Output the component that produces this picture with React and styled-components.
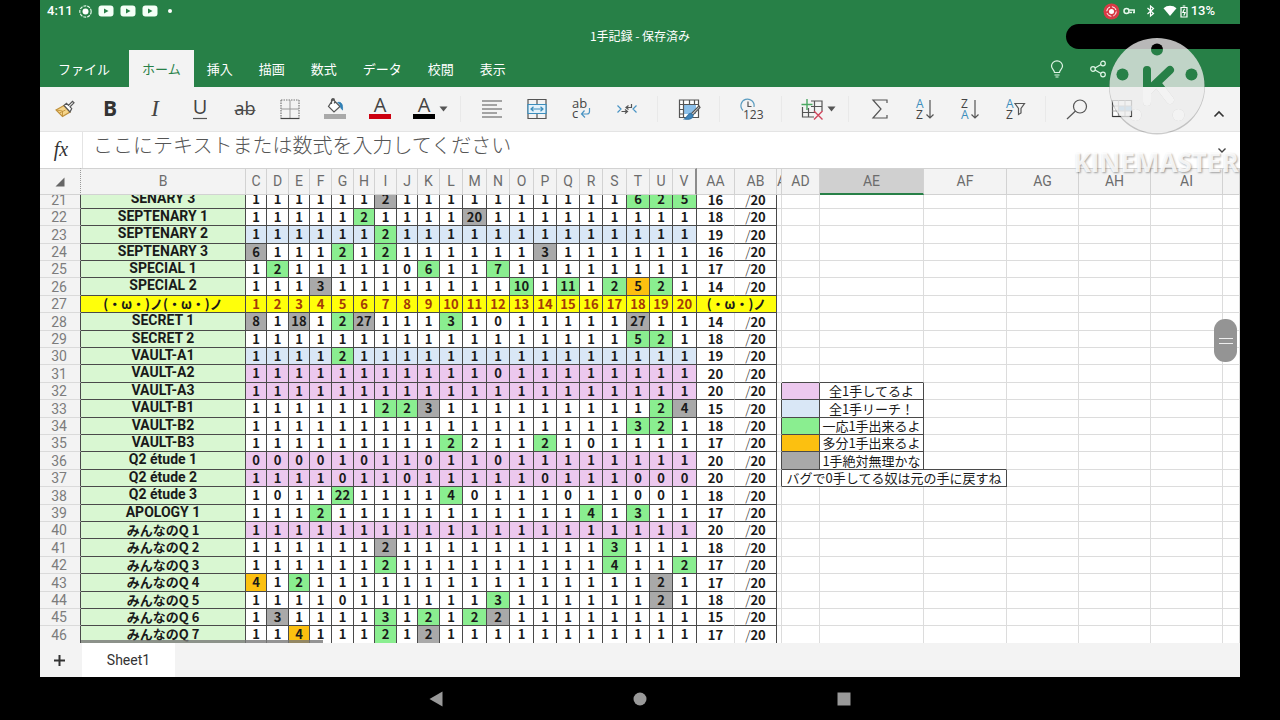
import styled, { createGlobalStyle, css } from 'styled-components';

const GlobalStyle = createGlobalStyle`
  * {
    box-sizing: border-box;
  }
  body {
    margin: 0;
    background: #000;
    font-family: 'Noto Sans CJK JP', 'Noto Sans', sans-serif;
  }
  button {
    border: 0;
    padding: 0;
    background: none;
    font-family: inherit;
    color: inherit;
    cursor: pointer;
  }
  svg {
    overflow: visible;
  }
`;

const COLORS = {
  g: '#8aee90',
  x: '#a9a9a9',
  o: '#fcc010',
  pink: '#ecc8ee',
  blue: '#d9e7f6',
  label: '#d9f7d2',
  yellow: '#ffff0a',
  line: '#4a4a4a',
  grid: '#dcdcdc',
};

const LATIN = "Roboto, 'Noto Sans CJK JP', sans-serif";

/* ---------- data ---------- */

const ROWS = [
  { no: 21, name: 'SENARY 3', v: '1 1 1 1 1 1 2x 1 1 1 1 1 1 1 1 1 1 6g 2g 5g', total: 16 },
  { no: 22, name: 'SEPTENARY 1', v: '1 1 1 1 1 2g 1 1 1 1 20x 1 1 1 1 1 1 1 1 1', total: 18 },
  { no: 23, name: 'SEPTENARY 2', v: '1 1 1 1 1 1 2g 1 1 1 1 1 1 1 1 1 1 1 1 1', total: 19, fill: 'blue' },
  { no: 24, name: 'SEPTENARY 3', v: '6x 1 1 1 2g 1 2g 1 1 1 1 1 1 3x 1 1 1 1 1 1', total: 16 },
  { no: 25, name: 'SPECIAL 1', v: '1 2g 1 1 1 1 1 0 6g 1 1 7g 1 1 1 1 1 1 1 1', total: 17 },
  { no: 26, name: 'SPECIAL 2', v: '1 1 1 3x 1 1 1 1 1 1 1 1 10g 1 11g 1 2g 5o 2g 1', total: 14 },
  { no: 27, name: '(・ω・)ノ(・ω・)ノ', v: '1 2 3 4 5 6 7 8 9 10 11 12 13 14 15 16 17 18 19 20', fill: 'yellow' },
  { no: 28, name: 'SECRET 1', v: '8x 1 18x 1 2g 27x 1 1 1 3g 1 0 1 1 1 1 1 27x 1 1', total: 14 },
  { no: 29, name: 'SECRET 2', v: '1 1 1 1 1 1 1 1 1 1 1 1 1 1 1 1 1 5g 2g 1', total: 18 },
  { no: 30, name: 'VAULT-A1', v: '1 1 1 1 2g 1 1 1 1 1 1 1 1 1 1 1 1 1 1 1', total: 19, fill: 'blue' },
  { no: 31, name: 'VAULT-A2', v: '1 1 1 1 1 1 1 1 1 1 1 0 1 1 1 1 1 1 1 1', total: 20, fill: 'pink' },
  { no: 32, name: 'VAULT-A3', v: '1 1 1 1 1 1 1 1 1 1 1 1 1 1 1 1 1 1 1 1', total: 20, fill: 'pink' },
  { no: 33, name: 'VAULT-B1', v: '1 1 1 1 1 1 2g 2g 3x 1 1 1 1 1 1 1 1 1 2g 4x', total: 15 },
  { no: 34, name: 'VAULT-B2', v: '1 1 1 1 1 1 1 1 1 1 1 1 1 1 1 1 1 3g 2g 1', total: 18 },
  { no: 35, name: 'VAULT-B3', v: '1 1 1 1 1 1 1 1 1 2g 2 1 1 2g 1 0 1 1 1 1', total: 17 },
  { no: 36, name: 'Q2 étude 1', v: '0 0 0 0 1 0 1 1 0 1 1 0 1 1 1 1 1 1 1 1', total: 20, fill: 'pink' },
  { no: 37, name: 'Q2 étude 2', v: '1 1 1 1 0 1 1 0 1 1 1 1 1 0 1 1 1 0 0 0', total: 20, fill: 'pink' },
  { no: 38, name: 'Q2 étude 3', v: '1 0 1 1 22g 1 1 1 1 4g 0 1 1 1 0 1 1 0 0 1', total: 18 },
  { no: 39, name: 'APOLOGY 1', v: '1 1 1 2g 1 1 1 1 1 1 1 1 1 1 1 4g 1 3g 1 1', total: 17 },
  { no: 40, name: 'みんなのQ 1', v: '1 1 1 1 1 1 1 1 1 1 1 1 1 1 1 1 1 1 1 1', total: 20, fill: 'pink' },
  { no: 41, name: 'みんなのQ 2', v: '1 1 1 1 1 1 2x 1 1 1 1 1 1 1 1 1 3g 1 1 1', total: 18 },
  { no: 42, name: 'みんなのQ 3', v: '1 1 1 1 1 1 2g 1 1 1 1 1 1 1 1 1 4g 1 1 2g', total: 17 },
  { no: 43, name: 'みんなのQ 4', v: '4o 1 2g 1 1 1 1 1 1 1 1 1 1 1 1 1 1 1 2x 1', total: 17 },
  { no: 44, name: 'みんなのQ 5', v: '1 1 1 1 0 1 1 1 1 1 1 3g 1 1 1 1 1 1 2x 1', total: 18 },
  { no: 45, name: 'みんなのQ 6', v: '1 3x 1 1 1 1 3g 1 2g 1 2g 2x 1 1 1 1 1 1 1 1', total: 15 },
  { no: 46, name: 'みんなのQ 7', v: '1 1 4o 1 1 1 2g 1 2x 1 1 1 1 1 1 1 1 1 1 1', total: 17 },
];

const LEGEND = {
  32: { fill: 'pink', text: '全1手してるよ' },
  33: { fill: 'blue', text: '全1手リーチ！' },
  34: { fill: 'g', text: '一応1手出来るよ' },
  35: { fill: 'o', text: '多分1手出来るよ' },
  36: { fill: 'x', text: '1手絶対無理かな' },
};

const NOTE_ROW = 37;

const COLUMNS = [
  ['B', 165],
  ['C', 21],
  ['D', 22],
  ['E', 21],
  ['F', 22],
  ['G', 22],
  ['H', 21],
  ['I', 22],
  ['J', 21],
  ['K', 22],
  ['L', 23],
  ['M', 24],
  ['N', 23],
  ['O', 24],
  ['P', 23],
  ['Q', 23],
  ['R', 23],
  ['S', 24],
  ['T', 23],
  ['U', 23],
  ['V', 24],
  ['AA', 38],
  ['AB', 42],
  ['AC', 5],
  ['AD', 38],
  ['AE', 104],
  ['AF', 83],
  ['AG', 72],
  ['AH', 72],
  ['AI', 72],
  ['', null],
];

const TABS = ['ファイル', 'ホーム', '挿入', '描画', '数式', 'データ', '校閲', '表示'];

/* ---------- shell ---------- */

const Device = styled.div`
  min-height: 100vh;
  display: flex;
  flex-direction: column;
  background: #000;
`;

const Screen = styled.main`
  position: relative;
  flex: 1;
  margin: 0 40px;
  display: flex;
  flex-direction: column;
  overflow: hidden;
  background: #fff;
`;

const AppHeader = styled.header`
  background: #278047;
  color: #fff;
`;

const StatusBar = styled.div`
  height: 22px;
  padding: 0 25px 0 7px;
  display: flex;
  align-items: center;
  justify-content: space-between;
  font: 500 13px/22px Roboto, sans-serif;
`;

const StatusGroup = styled.div`
  display: flex;
  align-items: center;
  gap: ${p => p.$gap}px;
`;

const MoreDot = styled.span`
  width: 4px;
  height: 4px;
  margin-left: 4px;
  border-radius: 50%;
  background: #fff;
`;

const TitleRow = styled.div`
  height: 28px;
  display: grid;
  grid-template-columns: 1fr auto 1fr;
  align-items: center;
`;

const Title = styled.h1`
  grid-column: 2;
  margin: 0;
  font-size: 12px;
  font-weight: 400;
  line-height: 28px;
`;

const AccountBar = styled.div`
  justify-self: end;
  width: 174px;
  height: 25px;
  border-radius: 13px 0 0 13px;
  background: #000;
`;

const TabRow = styled.nav`
  height: 37px;
  padding-left: 5px;
  display: flex;
`;

const Tab = styled.button`
  padding: 0 13px;
  font-size: 13px;
  line-height: 37px;
  ${p =>
    p.$active &&
    css`
      background: #f3f3f3;
      color: #278047;
    `}
  &:first-child {
    margin-right: 6px;
  }
`;

const HeaderActions = styled.div`
  margin-left: auto;
  padding-right: 134px;
  display: flex;
  align-items: center;
  gap: 26px;
`;

const IconButton = styled.button`
  display: flex;
  align-items: center;
  justify-content: center;
`;

/* ---------- ribbon ---------- */

const Ribbon = styled.div`
  height: 45px;
  padding-left: 2px;
  display: flex;
  align-items: center;
  background: #f3f3f3;
  border-bottom: 1px solid #e4e4e4;
`;

const Tool = styled.button`
  width: ${p => (p.$menu ? 50 : 45)}px;
  padding-left: ${p => (p.$menu ? 11 : 0)}px;
  height: 44px;
  display: flex;
  flex: none;
  align-items: center;
  justify-content: ${p => (p.$menu ? 'flex-start' : 'center')};
  gap: 4px;
`;

const Divider = styled.span`
  flex: none;
  width: 1px;
  height: 26px;
  margin: 0 8px;
  background: #e9e9e9;
`;

const Collapse = styled(IconButton)`
  margin-left: auto;
  padding: 10px 15px 0 0;
`;

const FormulaBar = styled.div`
  height: 36px;
  display: flex;
  background: #fff;
`;

const Fx = styled.label`
  width: 43px;
  border-right: 1px solid #e4e4e4;
  text-align: center;
  font: italic 20px/34px 'Liberation Serif', serif;
  color: #333;
`;

const FormulaInput = styled.input`
  flex: 1;
  min-width: 0;
  height: 26px;
  padding: 0 0 0 10px;
  border: 0;
  outline: 0;
  font: 300 20px/26px 'Noto Sans CJK JP', sans-serif;
  &::placeholder {
    color: #555;
    opacity: 1;
  }
`;

const Expand = styled(IconButton)`
  padding-right: 13px;
`;

/* ---------- sheet ---------- */

const Sheet = styled.table`
  width: 100%;
  table-layout: fixed;
  border-collapse: separate;
  border-spacing: 0;
`;

const ColumnHead = styled.th`
  height: 27px;
  padding: 0;
  overflow: hidden;
  border: solid #d2d2d2;
  border-width: 1px 1px 1px 0;
  background: #f3f3f3;
  font-family: ${LATIN};
  font-size: 14px;
  font-weight: 400;
  line-height: 24px;
  vertical-align: top;
  color: #6c6c6c;
  ${p =>
    p.$selected &&
    css`
      background: #d0d0d0;
      border-bottom: 2px solid #278047;
    `}
  ${p =>
    p.$hiddenAfter &&
    css`
      border-right: 2px solid #8c8c8c;
    `}
`;

const Corner = styled(ColumnHead)`
  padding: 8px 15px 0 0;
  border-right: 1px dotted #999;
  svg {
    display: block;
    margin-left: auto;
  }
`;

const SheetView = styled.section`
  position: relative;
  flex: 1 0 448px;
  height: 448px;
  overflow: hidden;
`;

const BodyTable = styled(Sheet)`
  margin-top: -4px;
`;

const Row = styled.tr`
  height: 17px;
  &:nth-child(5n + 1),
  &:nth-child(5n + 3) {
    height: 18px;
  }
`;

const Cell = styled.td`
  padding: 0;
  white-space: nowrap;
  text-align: center;
  vertical-align: top;
  font-size: 13px;
  font-weight: ${p => (p.$plain ? 400 : 700)};
  line-height: 15px;
  color: ${p => p.$color || '#1a1a1a'};
  background: ${p => COLORS[p.$fill] || 'transparent'};
  border: solid ${COLORS.line};
  border-width: 0 1px 1px 0;
  border-right-color: ${p => (p.$lightRight ? COLORS.grid : COLORS.line)};
  border-bottom-color: ${p => (p.$lightBottom ? COLORS.grid : COLORS.line)};
  ${p =>
    p.$low &&
    css`
      vertical-align: bottom;
      line-height: 16px;
    `}
`;

const LatinCell = styled(Cell)`
  font-family: ${LATIN};
  font-size: 14px;
`;

const RowHead = styled.th`
  padding: 0 2px 0 0;
  border: solid #dadada;
  border-width: 0 1px 1px 0;
  border-right-color: ${COLORS.line};
  background: #f3f3f3;
  vertical-align: bottom;
  font-family: ${LATIN};
  font-size: 14px;
  font-weight: 400;
  line-height: 16px;
  color: #7c7c7c;
`;

const Slash = styled.span`
  font-weight: 300;
`;

const ScrollHandle = styled.div`
  position: absolute;
  top: 124px;
  right: 3px;
  width: 23px;
  height: 43px;
  border-radius: 11px;
  background: #949494;
  display: flex;
  flex-direction: column;
  align-items: center;
  justify-content: center;
  gap: 4px;
  &::before,
  &::after {
    content: '';
    width: 14px;
    height: 1px;
    background: #eee;
  }
`;

const ScrollTrack = styled.div`
  position: absolute;
  left: 41px;
  bottom: 0;
  width: 242px;
  height: 3px;
  background: rgba(120, 120, 120, 0.8);
`;

const SheetBar = styled.footer`
  height: 34px;
  display: flex;
  background: #f3f3f3;
`;

const AddSheet = styled(IconButton)`
  width: 42px;
  padding-right: 3px;
`;

const SheetTab = styled.button`
  width: 93px;
  background: #fff;
  font: 400 14px/34px Roboto, sans-serif;
  color: #333;
`;

const NavBar = styled.nav`
  height: 43px;
  display: flex;
  align-items: center;
  justify-content: center;
  gap: 190px;
`;

const Watermark = styled.div`
  position: absolute;
  top: 36px;
  right: 0;
  width: 168px;
  display: flex;
  flex-direction: column;
  align-items: center;
  pointer-events: none;
`;

const WatermarkText = styled.span`
  margin-top: 14px;
  font: 700 26px/28px 'Open Sans', sans-serif;
  color: rgba(255, 255, 255, 0.85);
  text-shadow: 1px 1px 2px rgba(0, 0, 0, 0.35);
`;

/* ---------- icons ---------- */

const Svg = ({ w = 22, h = 22, children, ...rest }) => (
  <svg
    width={w}
    height={h}
    viewBox={`0 0 ${w} ${h}`}
    fill="none"
    stroke="#555"
    strokeWidth="1.2"
    aria-hidden="true"
    {...rest}
  >
    {children}
  </svg>
);

const glyph = { stroke: 'none', fontFamily: 'Open Sans, sans-serif', fill: '#444' };

const Caret = () => (
  <Svg w={9} h={6} stroke="none">
    <path d="M0.5 0.5h8L4.5 5.5z" fill="#555" />
  </Svg>
);

const BrushIcon = () => (
  <Svg>
    <path d="M2 12L10 7.5l6 6.5L8.500 18.500z" fill="#f6d58a" stroke="#c0913c" />
    <path d="M2 12l6.500 1 0 5.500M5.500 15l6-3" stroke="#c0913c" strokeWidth="0.9" />
    <path d="M10 7.500l2.500-2.200 2 2 4-4 1.500 1.500-4 4 1.700 1.700-1.700 3.500z" fill="#fff" />
  </Svg>
);

const BoldIcon = () => (
  <Svg>
    <text x="11" y="18" textAnchor="middle" fontSize="21" fontWeight="700" {...glyph} fill="#333">B</text>
  </Svg>
);

const ItalicIcon = () => (
  <Svg>
    <text x="11" y="18" textAnchor="middle" fontSize="23" fontStyle="italic" {...glyph} fontFamily="Liberation Serif, serif">I</text>
  </Svg>
);

const UnderlineIcon = () => (
  <Svg>
    <text x="11" y="16" textAnchor="middle" fontSize="20" {...glyph}>U</text>
    <path d="M4 20.500h14" />
  </Svg>
);

const StrikeIcon = () => (
  <Svg>
    <text x="11" y="17" textAnchor="middle" fontSize="18" {...glyph}>ab</text>
    <path d="M0.500 12.500h21" />
  </Svg>
);

const BordersIcon = () => (
  <Svg>
    <path d="M2 2h18M2 2v18M20 2v18" stroke="#777" strokeDasharray="1.500 1" />
    <path d="M11 2v18M2 11h18" stroke="#999" strokeWidth="1" />
    <path d="M1.500 20.500h19" stroke="#444" />
  </Svg>
);

const FillIcon = () => (
  <Svg h={24}>
    <path d="M9 2.500l7 7-6 5.500-5.500-5.500zM7.500 7V3.500c0-2.500 3-2.500 3 0v3" fill="#fff" />
    <path d="M13.500 5.500c4-1 5.500 2 5 7.500-1.500-1-2-3-2.500-5" fill="#2f7fb5" stroke="#2f7fb5" strokeWidth="0.8" />
    <path d="M0 17h22v5H0z" fill="#a9a9a9" stroke="none" />
  </Svg>
);

const LetterColorIcon = ({ color }) => (
  <Svg h={24}>
    <text x="11" y="15" textAnchor="middle" fontSize="20" {...glyph}>A</text>
    <path d="M0 17h22v5H0z" fill={color} stroke="none" />
  </Svg>
);

const AlignIcon = () => (
  <Svg>
    <path d="M1 3h20M1 7h15M1 11h20M1 15h15M1 19h20" />
  </Svg>
);

const MergeIcon = () => (
  <Svg>
    <path d="M2 1.500h18v19H2zM2 6.500h18M2 15.500h18M11 1.500v5M11 15.500v5" />
    <path d="M2 6.500h18v9H2z" fill="#e4f2fb" stroke="#3c8ebd" />
    <path d="M5 11h12M7.500 8.800L5 11l2.500 2.200M14.500 8.800L17 11l-2.500 2.200" stroke="#3c8ebd" />
  </Svg>
);

const WrapIcon = () => (
  <Svg>
    <text x="1" y="10" fontSize="13" {...glyph}>ab</text>
    <text x="1" y="20" fontSize="13" {...glyph}>c</text>
    <path d="M18.500 10v3.500c0 1.500-1 2.500-2.500 2.500h-5M13.500 12.500L10.500 16l3.500 3.500" stroke="#4a94c4" />
  </Svg>
);

const ShrinkIcon = () => (
  <Svg>
    <path d="M1.500 7.500L5 11l-3.500 3.500M20.500 7.500L17 11l3.500 3.500" stroke="#4a94c4" />
    <path d="M5.500 13.500h5.500M9 11.500l2.500 2-2.500 2M15.500 6v3.500h-5M12.500 7.500l-2.500 2 2.500 2" />
  </Svg>
);

const FormatIcon = () => (
  <Svg>
    <path d="M1.500 2h19v17.500h-19z" fill="#fff" />
    <path d="M5.500 6.500H18V16H5.500z" fill="#8cc0ea" stroke="none" />
    <path d="M1.500 6.500h19M5.500 2v17.500M11.500 2v4M16.500 2v4M1.500 11.500h4M1.500 16h4" />
    <path d="M21 8l-8 8 1.500 1.500 7.500-8z" fill="#fff" />
    <path d="M13 15.500c-2.500-.5-3 3-6.500 5.500 3.500.5 8 .5 8.500-3.500z" fill="#3f86bd" stroke="#3a78a8" />
  </Svg>
);

const NumberIcon = () => (
  <Svg>
    <path d="M3 12.500A6.600 6.600 0 1 1 14 9" stroke="#5a9cc0" />
    <path d="M8 3.500v5h3.500" />
    <text x="3" y="21" fontSize="12" {...glyph}>123</text>
  </Svg>
);

const CellsIcon = () => (
  <Svg>
    <path d="M10 3h11v10M1.500 9v10H13M1.500 14.500H14M7.500 10v9M13.500 3v10M10 8.500h11" />
    <path d="M6 1v11M0.500 6.500h11" stroke="#4ba862" strokeWidth="1.400" />
    <path d="M13 13l8.500 8.500M21.500 13L13 21.500" stroke="#d0455c" strokeWidth="1.400" />
  </Svg>
);

const SumIcon = () => (
  <Svg>
    <path d="M18 5V2H4l8 9-8 9h14v-3" />
  </Svg>
);

const SortIcon = ({ top, bottom, topColor, bottomColor }) => (
  <Svg>
    <text x="2" y="9.500" fontSize="12" {...glyph} fill={topColor}>{top}</text>
    <text x="2" y="20.500" fontSize="12" {...glyph} fill={bottomColor}>{bottom}</text>
    <path d="M16 2v18M12.500 16.500L16 20l3.500-3.500" />
  </Svg>
);

const FilterIcon = () => (
  <Svg>
    <text x="2" y="9.500" fontSize="12" {...glyph} fill="#3c8ebd">A</text>
    <text x="2" y="20.500" fontSize="12" {...glyph}>Z</text>
    <path d="M11 5.500h9.500l-3.500 5v4.500l-2.500 1.500v-6z" />
  </Svg>
);

const SearchIcon = () => (
  <Svg>
    <circle cx="14" cy="8.500" r="6.500" />
    <path d="M9.500 13l-8.500 8" />
  </Svg>
);

const TableIcon = () => (
  <Svg>
    <path d="M1.500 2.500h19v16h-19z" fill="#fff" />
    <path d="M7.500 8h13v5h-13z" fill="#8cc0ea" stroke="none" />
    <path d="M1.500 8h19M1.500 13h19M7.500 2.500v16M14 2.500v16" stroke="#aaa" />
    <path d="M1.500 18.500h19" stroke="#333" />
  </Svg>
);

const ChevronUp = () => (
  <Svg w={12} h={8} stroke="#333" strokeWidth="1.600">
    <path d="M1.500 6.500L6 2l4.500 4.500" />
  </Svg>
);

const ChevronDown = () => (
  <Svg w={10} h={7} stroke="#444" strokeWidth="1.400">
    <path d="M1.500 1.500L5 5l3.500-3.500" />
  </Svg>
);

const BulbIcon = () => (
  <Svg w={14} h={18} stroke="#dff5e6">
    <path d="M4.500 12.500C4.500 10 1.500 9 1.500 6a5.500 5.200 0 0 1 11 0c0 3-3 4-3 6.500zM4.500 15h5M5.500 17h3" />
  </Svg>
);

const ShareIcon = () => (
  <Svg w={16} h={18} stroke="#dff5e6">
    <circle cx="3" cy="9" r="2.300" />
    <circle cx="13" cy="3.500" r="2.300" />
    <circle cx="13" cy="14.500" r="2.300" />
    <path d="M5 8l6-3.400M5 10l6 3.400" />
  </Svg>
);

const RecordIcon = () => (
  <Svg w={13} h={13} stroke="#dff5e6">
    <circle cx="6.500" cy="6.500" r="5.700" strokeDasharray="3 1" />
    <circle cx="6.500" cy="6.500" r="3" fill="#fff" stroke="none" />
  </Svg>
);

const VideoIcon = () => (
  <Svg w={16} h={12} stroke="none">
    <rect x="0.500" y="0.500" width="15" height="11" rx="3" fill="#f4fff7" />
    <path d="M6 3.500v5L10.500 6z" fill="#278047" />
  </Svg>
);

const CastIcon = () => (
  <Svg w={17} h={17} stroke="none">
    <circle cx="8.500" cy="8.500" r="8" fill="#d83a45" />
    <circle cx="8.500" cy="8.500" r="4.800" stroke="#fff" strokeWidth="1" strokeDasharray="5.500 2" />
    <circle cx="8.500" cy="8.500" r="2.500" fill="#fff" />
  </Svg>
);

const KeyIcon = () => (
  <Svg w={12} h={8} stroke="#e6f7eb" strokeWidth="1.500">
    <path d="M6.200 3h5v2.500H10M9 5.500H6.200" />
    <circle cx="3.500" cy="4" r="2.500" />
  </Svg>
);

const BluetoothIcon = () => (
  <Svg w={9} h={12} stroke="#fff">
    <path d="M1.500 3l6 5.500-3 2.500V1l3 2.500-6 5.500" />
  </Svg>
);

const WifiIcon = () => (
  <Svg w={14} h={12} stroke="none">
    <path d="M0.500 3.200a10 10 0 0 1 13 0L7 11z" fill="#fff" />
  </Svg>
);

const BatteryIcon = () => (
  <Svg w={8} h={13} stroke="#fff">
    <path d="M1 2.500h6v9.500H1zM2.700 1h2.600" />
    <path d="M4.500 3.800L2.800 7.500h2.400L3.800 10.500" strokeWidth="1.100" />
  </Svg>
);

const SelectAllIcon = () => (
  <Svg w={10} h={10} stroke="none">
    <path d="M9.500 0.500v9h-9z" fill="#666" />
  </Svg>
);

const PlusIcon = () => (
  <Svg w={13} h={13} stroke="#333" strokeWidth="2">
    <path d="M6.500 1v11M1 6.500h11" />
  </Svg>
);

const WatermarkLogo = () => (
  <svg width="98" height="98" viewBox="0 0 98 98" aria-hidden="true">
    <mask id="reel">
      <rect width="100" height="100" fill="#fff" />
      <circle cx="50" cy="13.500" r="6" fill="#000" />
      <circle cx="15.500" cy="38.500" r="6" fill="#000" />
      <circle cx="84.500" cy="38.500" r="6" fill="#000" />
      <circle cx="28.500" cy="79" r="6" fill="#000" />
      <circle cx="71.500" cy="79" r="6" fill="#000" />
      <path d="M40 34v32M63 34L42 54M50 47l13 17" stroke="#000" strokeWidth="8" strokeLinecap="round" />
    </mask>
    <circle cx="50" cy="50.500" r="48" fill="rgba(0,0,0,0.2)" mask="url(#reel)" />
    <circle cx="50" cy="49.500" r="47.500" fill="#fff" fillOpacity="0.72" mask="url(#reel)" />
  </svg>
);

/* ---------- parts ---------- */

const TOOL_GROUPS = [
  [
    ['書式のコピー', <BrushIcon />],
    ['太字', <BoldIcon />],
    ['斜体', <ItalicIcon />],
    ['下線', <UnderlineIcon />],
    ['取り消し線', <StrikeIcon />],
    ['罫線', <BordersIcon />],
    ['塗りつぶし', <FillIcon />],
    ['フォントの色', <LetterColorIcon color="#cc0010" />],
    ['フォント', <LetterColorIcon color="#000" />, true],
  ],
  [
    ['配置', <AlignIcon />],
    ['セルの結合', <MergeIcon />],
    ['折り返し', <WrapIcon />],
    ['縮小', <ShrinkIcon />],
  ],
  [['セルのスタイル', <FormatIcon />]],
  [['表示形式', <NumberIcon />]],
  [['挿入と削除', <CellsIcon />, true]],
  [
    ['合計', <SumIcon />],
    ['昇順', <SortIcon top="A" bottom="Z" topColor="#3c8ebd" bottomColor="#444" />],
    ['降順', <SortIcon top="Z" bottom="A" topColor="#444" bottomColor="#3c8ebd" />],
    ['フィルター', <FilterIcon />],
  ],
  [
    ['検索', <SearchIcon />],
    ['テーブル', <TableIcon />],
  ],
];

const ToolGroup = ({ tools, first }) => (
  <>
    {!first && <Divider />}
    {tools.map(([label, icon, menu]) => (
      <Tool key={label} aria-label={label} $menu={menu}>
        {icon}
        {menu && <Caret />}
      </Tool>
    ))}
  </>
);

const Columns = () => (
  <colgroup>
    <col style={{ width: 41 }} />
    {COLUMNS.map(([name, width]) => (
      <col key={name} style={width ? { width } : undefined} />
    ))}
  </colgroup>
);

const SideCells = ({ no }) => {
  const legend = LEGEND[no];
  if (no === NOTE_ROW) {
    return (
      <>
        <Cell $lightBottom />
        <Cell colSpan={3} $plain $low>
          バグで0手してる奴は元の手に戻すね
        </Cell>
      </>
    );
  }
  const beforeNote = no === NOTE_ROW - 1;
  return (
    <>
      <Cell $lightBottom $lightRight={!legend} />
      <Cell $fill={legend?.fill} $lightBottom={!legend && no !== 31} $lightRight={!legend} />
      <Cell $plain $low $lightBottom={!legend && no !== 31} $lightRight={!legend}>
        {legend?.text}
      </Cell>
      <Cell $lightRight $lightBottom={!beforeNote} />
    </>
  );
};

const SheetRow = ({ row }) => {
  const { no, name, v, total, fill } = row;
  const banner = fill === 'yellow';
  const NameCell = /^[A-Z]/.test(name) ? LatinCell : Cell;
  return (
    <Row>
      <RowHead scope="row">{no}</RowHead>
      <NameCell $fill={banner ? 'yellow' : 'label'}>{name}</NameCell>
      {v.split(' ').map((value, i) => (
        <Cell
          key={i}
          $fill={COLORS[value.slice(-1)] ? value.slice(-1) : fill}
          $color={banner ? '#a33a08' : undefined}
        >
          {parseInt(value, 10)}
        </Cell>
      ))}
      {banner ? (
        <Cell colSpan={2} $fill="yellow">
          (・ω・)ノ
        </Cell>
      ) : (
        <>
          <Cell $low $lightRight>
            {total}
          </Cell>
          <Cell $low>
            <Slash>/</Slash>20
          </Cell>
        </>
      )}
      <SideCells no={no} />
      {['AG', 'AH', 'AI', 'AJ'].map(col => (
        <Cell key={col} $lightRight $lightBottom />
      ))}
    </Row>
  );
};

export default function App() {
  return (
    <Device>
      <GlobalStyle />
      <Screen>
        <AppHeader>
          <StatusBar>
            <StatusGroup $gap={6}>
              <span>4:11</span>
              <RecordIcon />
              <VideoIcon />
              <VideoIcon />
              <VideoIcon />
              <MoreDot />
            </StatusGroup>
            <StatusGroup $gap={3}>
              <CastIcon />
              <KeyIcon />
              <StatusGroup $gap={8}>
                <span />
                <BluetoothIcon />
                <WifiIcon />
              </StatusGroup>
              <BatteryIcon />
              <span>13%</span>
            </StatusGroup>
          </StatusBar>
          <TitleRow>
            <Title>1手記録 - 保存済み</Title>
            <AccountBar />
          </TitleRow>
          <TabRow>
            {TABS.map(tab => (
              <Tab key={tab} $active={tab === 'ホーム'}>
                {tab}
              </Tab>
            ))}
            <HeaderActions>
              <IconButton aria-label="ヒント">
                <BulbIcon />
              </IconButton>
              <IconButton aria-label="共有">
                <ShareIcon />
              </IconButton>
            </HeaderActions>
          </TabRow>
        </AppHeader>

        <Ribbon>
          {TOOL_GROUPS.map((tools, i) => (
            <ToolGroup key={i} tools={tools} first={i === 0} />
          ))}
          <Collapse aria-label="リボンを閉じる">
            <ChevronUp />
          </Collapse>
        </Ribbon>

        <FormulaBar>
          <Fx htmlFor="formula">fx</Fx>
          <FormulaInput id="formula" placeholder="ここにテキストまたは数式を入力してください" />
          <Expand aria-label="数式バーを広げる">
            <ChevronDown />
          </Expand>
        </FormulaBar>

        <Sheet>
          <Columns />
          <thead>
            <tr>
              <Corner>
                <SelectAllIcon />
              </Corner>
              {COLUMNS.map(([name]) => (
                <ColumnHead key={name} $selected={name === 'AE'} $hiddenAfter={name === 'V'}>
                  {name}
                </ColumnHead>
              ))}
            </tr>
          </thead>
        </Sheet>

        <SheetView>
          <BodyTable>
            <Columns />
            <tbody>
              {ROWS.map(row => (
                <SheetRow key={row.no} row={row} />
              ))}
            </tbody>
          </BodyTable>
          <ScrollTrack />
          <ScrollHandle />
        </SheetView>

        <SheetBar>
          <AddSheet aria-label="シートを追加">
            <PlusIcon />
          </AddSheet>
          <SheetTab>Sheet1</SheetTab>
        </SheetBar>

        <Watermark>
          <WatermarkLogo />
          <WatermarkText>KINEMASTER</WatermarkText>
        </Watermark>
      </Screen>

      <NavBar>
        <IconButton aria-label="戻る">
          <Svg w={14} h={16} stroke="none">
            <path d="M13.500 0.500v15L0.500 8z" fill="#999" />
          </Svg>
        </IconButton>
        <IconButton aria-label="ホーム">
          <Svg w={14} h={14} stroke="none">
            <circle cx="7" cy="7" r="6.500" fill="#999" />
          </Svg>
        </IconButton>
        <IconButton aria-label="履歴">
          <Svg w={14} h={14} stroke="none">
            <path d="M0.500 0.500h13v13h-13z" fill="#999" />
          </Svg>
        </IconButton>
      </NavBar>
    </Device>
  );
}
